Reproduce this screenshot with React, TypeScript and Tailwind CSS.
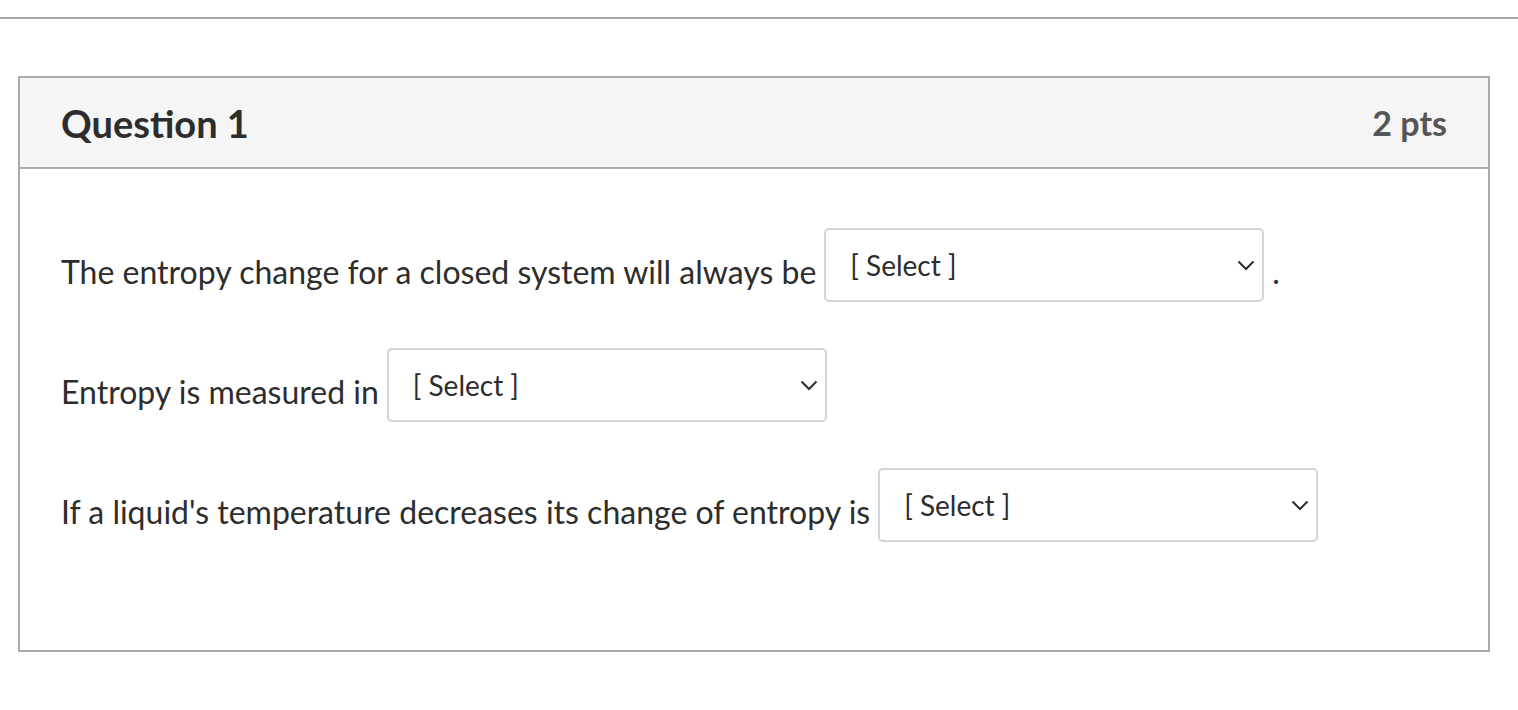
import React from "react";

function Select() {
  return (
    <div className="relative inline-flex h-[74px] w-[440px] shrink-0 rounded-[5px] border-2 border-[#d0d4d7] bg-white">
      <span className="pl-[24px] pt-[19px] text-[28px] leading-[32px] text-[#2d2d2d]">[ Select ]</span>
      <svg
        className="absolute right-[7px] top-[30px]"
        width="18"
        height="11"
        viewBox="0 0 18 11"
        fill="none"
      >
        <path d="M1.5 1.5 L9 9 L16.5 1.5" stroke="#2d2d2d" strokeWidth="2" />
      </svg>
    </div>
  );
}

export default function App() {
  return (
    <div className="min-h-[710px] bg-white pt-[17px] font-['Lato','Noto_Sans',sans-serif] text-[#2d2d2d]">
      <div className="h-[2px] w-full bg-[#aaaaaa]" />
      <div className="mx-[18px] mt-[57px] w-[1472px] border-2 border-[#aaaaaa]">
        <div className="flex h-[91px] items-center justify-between border-b-2 border-[#aaaaaa] bg-[#f5f5f5] px-[41px]">
          <span className="text-[38px] font-bold leading-none text-[#2d2d2d]">Question 1</span>
          <span className="text-[34px] font-bold leading-none text-[#555555]">2 pts</span>
        </div>
        <div className="flex flex-col gap-[46px] px-[41px] pb-[108px] pt-[59px] text-[32px]">
          <div className="flex items-center">
            <span className="mr-[8px] pt-[14px]">The entropy change for a closed system will always be</span>
            <Select />
            <span className="ml-[8px] pt-[14px]">.</span>
          </div>
          <div className="flex items-center">
            <span className="mr-[8px] pt-[14px]">Entropy is measured in</span>
            <Select />
          </div>
          <div className="flex items-center">
            <span className="mr-[8px] pt-[14px]">If a liquid's temperature decreases its change of entropy is</span>
            <Select />
          </div>
        </div>
      </div>
    </div>
  );
}
